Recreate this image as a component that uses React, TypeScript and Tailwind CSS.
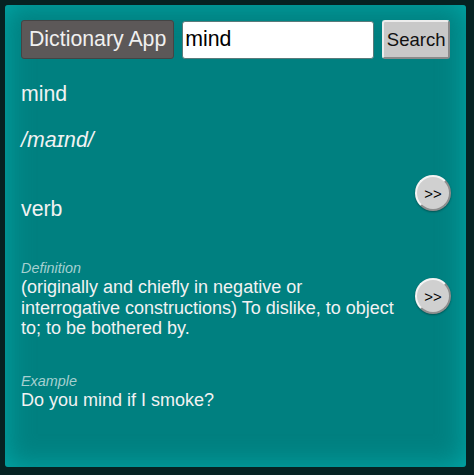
const font = { fontFamily: '"Liberation Sans", Arial, sans-serif' };

function NextButton() {
  return (
    <button
      type="button"
      className="w-9 h-9 shrink-0 rounded-full bg-[#d0d0d0] text-black text-[15px] leading-none border-2 border-t-[#f4f4f4] border-l-[#f4f4f4] border-r-[#8f8f8f] border-b-[#8f8f8f] shadow-[0_1px_2px_rgba(0,0,0,0.35)]"
    >
      &gt;&gt;
    </button>
  );
}

export default function App() {
  return (
    <div className="w-[474px] h-[475px] bg-[#062222] pt-[5px] pl-[5px]" style={font}>
      <div className="w-[461px] h-[462px] rounded-[3px] bg-[#008080] shadow-[inset_0_0_28px_rgba(0,200,200,0.55)] px-4 pt-[15px] text-[#f2f2f2]">
        {/* search bar */}
        <div className="flex items-center h-[39px] gap-2">
          <div className="h-[39px] w-[154px] flex items-center justify-center rounded-[3px] bg-[#5c5858] border border-[#444] text-[21.3px] text-[#f0f0f0]">
            Dictionary App
          </div>
          <input
            readOnly
            value="mind"
            className="h-[38px] w-[192px] rounded-[3px] bg-white border border-[#5a7a7a] text-black text-[21.3px] px-[2px] outline-none"
          />
          <button
            type="button"
            className="h-[39px] w-[68px] rounded-[3px] bg-[#c8c8c8] text-[#111] text-[18.5px] border-2 border-t-[#ececec] border-l-[#ececec] border-r-[#8a8a8a] border-b-[#8a8a8a]"
          >
            Search
          </button>
        </div>

        <p className="mt-[23px] text-[21.3px] leading-[24px]">mind</p>
        <p className="mt-[22px] text-[21.3px] leading-[24px] italic">/maɪnd/</p>

        {/* part of speech */}
        <div className="flex items-start justify-between mt-[23px]">
          <p className="mt-[22px] text-[21.3px] leading-[24px]">verb</p>
          <div className="mr-[-1px]">
            <NextButton />
          </div>
        </div>

        {/* definition */}
        <div className="flex items-start justify-between mt-[39px]">
          <div className="w-[378px]">
            <p className="text-[14.4px] leading-[17px] italic text-[#a6d0d0]">Definition</p>
            <p className="text-[18px] leading-[20.7px]">
              (originally and chiefly in negative or interrogative constructions) To dislike, to object
              to; to be bothered by.
            </p>
          </div>
          <div className="mt-[18px] mr-[-1px]">
            <NextButton />
          </div>
        </div>

        {/* example */}
        <div className="mt-[34px]">
          <p className="text-[14.4px] leading-[17px] italic text-[#a6d0d0]">Example</p>
          <p className="text-[18px] leading-[20.7px]">Do you mind if I smoke?</p>
        </div>
      </div>
    </div>
  );
}
